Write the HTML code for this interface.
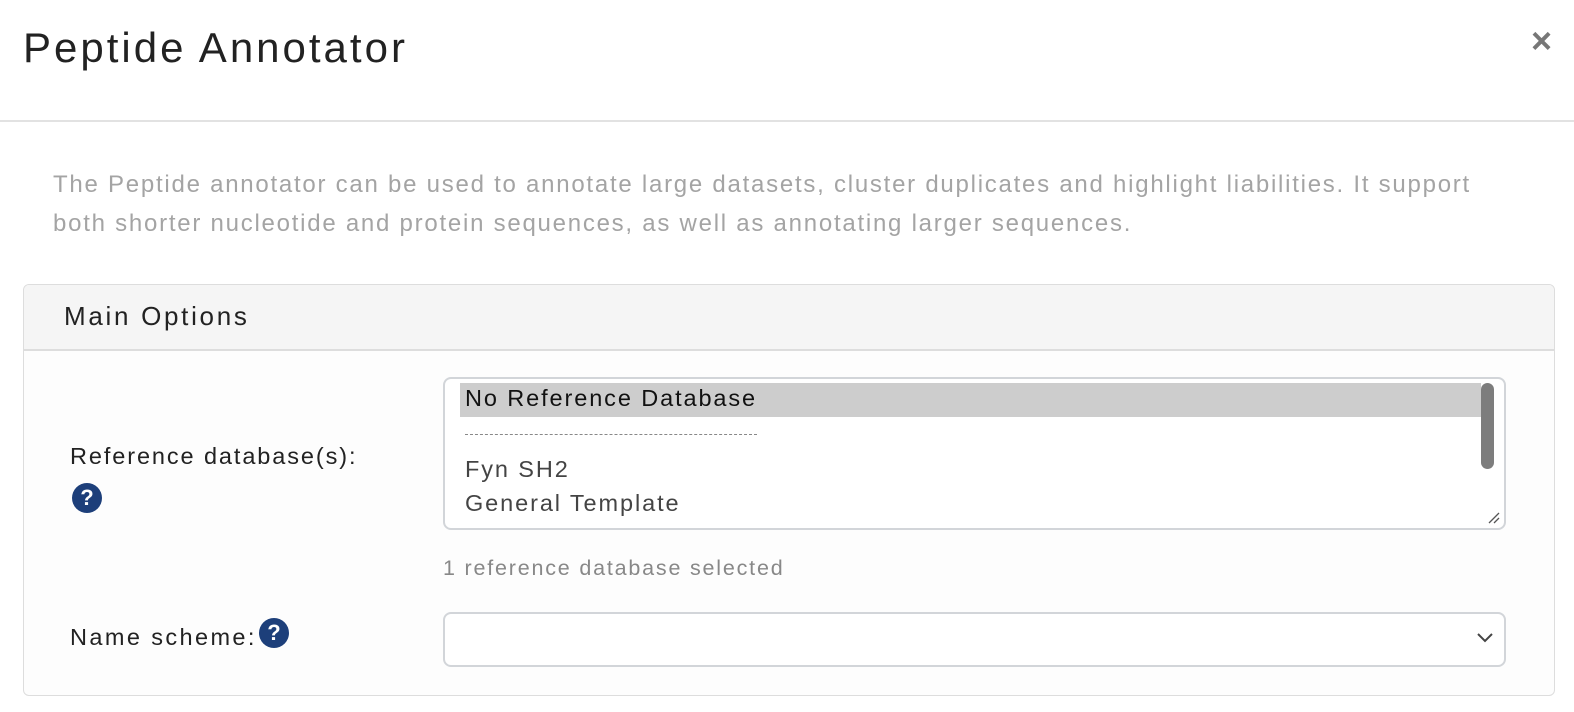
<!DOCTYPE html>
<html><head><style>
body{margin:0;width:1574px;height:712px;background:#fff;font-family:"Liberation Sans",sans-serif;position:relative;overflow:hidden;color:#222}
.a{position:absolute;white-space:nowrap}
.q{position:absolute;width:30px;height:30px;border-radius:50%;background:#1d3f7a;color:#fff;font-weight:bold;font-size:22px;text-align:center;line-height:30px}
</style></head><body>
<div class="a" style="left:23px;top:24px;font-size:42px;letter-spacing:3px;color:#222">Peptide Annotator</div>
<div class="a" style="left:1531px;top:20px;font-size:36px;font-weight:bold;color:#777">×</div>
<div class="a" style="left:0;top:120px;width:1574px;height:2px;background:#e2e2e2"></div>
<div class="a" style="left:53px;top:165px;font-size:24px;letter-spacing:1.75px;color:#a4a4a4;line-height:39px">The Peptide annotator can be used to annotate large datasets, cluster duplicates and highlight liabilities. It support<br>both shorter nucleotide and protein sequences, as well as annotating larger sequences.</div>
<div class="a" style="left:23px;top:284px;width:1530px;height:410px;border:1px solid #ddd;border-radius:6px;background:#fdfdfd;overflow:hidden">
 <div style="height:64px;background:#f5f5f5;border-bottom:2px solid #ddd"></div>
</div>
<div class="a" style="left:64px;top:301px;font-size:26px;letter-spacing:2.7px;color:#222">Main Options</div>
<div class="a" style="left:70px;top:443px;font-size:23.5px;letter-spacing:1.9px">Reference database(s):</div>
<div class="q" style="left:72px;top:483px">?</div>
<div class="a" style="left:443px;top:377px;width:1059px;height:149px;border:2px solid #d2d5d9;border-radius:8px;background:#fff"></div>
<div class="a" style="left:460px;top:383px;width:1021px;height:34px;background:#cdcdcd"></div>
<div class="a" style="left:1481px;top:383px;width:13px;height:86px;border-radius:7px;background:#7d7d7d"></div>
<div class="a" style="left:465px;top:385px;font-size:23.5px;letter-spacing:1.9px;color:#111">No Reference Database</div>
<div class="a" style="left:465px;top:434px;width:292px;height:0;border-top:1px dashed #888"></div>
<div class="a" style="left:465px;top:456px;font-size:23.5px;letter-spacing:1.9px;color:#444">Fyn SH2</div>
<div class="a" style="left:465px;top:490px;font-size:23.5px;letter-spacing:1.9px;color:#444">General Template</div>
<svg class="a" style="left:1488px;top:512px" width="12" height="12"><path d="M1 11L11 1M6 11L11 6" stroke="#555" stroke-width="1.3"/></svg>
<div class="a" style="left:443px;top:556px;font-size:21.5px;letter-spacing:1.8px;color:#888">1 reference database selected</div>
<div class="a" style="left:70px;top:624px;font-size:23.5px;letter-spacing:2.4px">Name scheme:</div>
<div class="q" style="left:259px;top:618px">?</div>
<div class="a" style="left:443px;top:612px;width:1059px;height:51px;border:2px solid #d2d5d9;border-radius:8px;background:#fff"></div>
<svg class="a" style="left:1476px;top:632px" width="18" height="12"><path d="M2 2L9 9L16 2" fill="none" stroke="#444" stroke-width="2"/></svg>
</body></html>
